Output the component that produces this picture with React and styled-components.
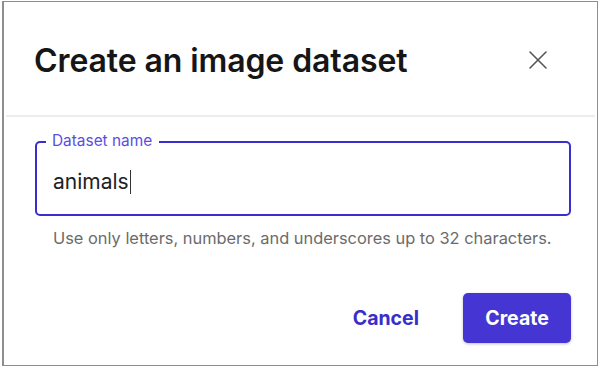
import React from "react";
import styled, { createGlobalStyle } from "styled-components";

const Global = createGlobalStyle`
  html, body { margin: 0; padding: 0; background: #ffffff; }
  * { box-sizing: border-box; }
  body { font-family: Inter, "Noto Sans", Arial, sans-serif; }
`;

const Frame = styled.div`
  width: 600px;
  height: 368px;
  padding: 1px 2px 2px 2px;
  background: #ffffff;
`;

const Dialog = styled.div`
  height: 100%;
  border: 1px solid #8e8e8e;
  border-left-width: 2px;
  background: #ffffff;
  display: flex;
  flex-direction: column;
`;

const Header = styled.div`
  height: 113px;
  display: flex;
  align-items: center;
  justify-content: space-between;
  padding: 3px 48px 0 30px;
`;

const Title = styled.h1`
  margin: 0;
  font-family: Inter, sans-serif;
  font-weight: 600;
  font-size: 32px;
  letter-spacing: -0.1px;
  color: #161616;
`;

const CloseButton = styled.button`
  border: 0;
  background: transparent;
  padding: 0;
  width: 22px;
  height: 22px;
  display: flex;
  align-items: center;
  justify-content: center;
  cursor: pointer;
`;

const Divider = styled.div`
  height: 2px;
  margin: 0 2px;
  background: #ececec;
`;

const Body = styled.div`
  padding: 24px 26px 0 31px;
  display: flex;
  flex-direction: column;
`;

const Field = styled.div`
  position: relative;
  height: 75px;
  border: 2px solid #3a2ecf;
  border-radius: 5px;
  display: flex;
  align-items: center;
  padding: 6px 16px 0 16px;
`;

const Label = styled.span`
  position: absolute;
  top: -11px;
  left: 9px;
  padding: 0 7px 0 6px;
  background: #ffffff;
  font-size: 15.4px;
  line-height: 18px;
  color: #5a4ee0;
`;

const Value = styled.span`
  font-size: 21px;
  color: #222222;
  display: flex;
  align-items: center;
`;

const Caret = styled.span`
  display: inline-block;
  width: 1.5px;
  height: 24px;
  margin-left: 1px;
  background: #333333;
`;

const Helper = styled.p`
  margin: 12px 0 0 18px;
  font-size: 16.4px;
  color: #6b6b6b;
`;

const Footer = styled.div`
  margin-top: auto;
  padding: 0 26px 22px 0;
  display: flex;
  justify-content: flex-end;
  align-items: center;
  gap: 44px;
`;

const TextButton = styled.button`
  border: 0;
  background: transparent;
  font-family: Inter, sans-serif;
  font-weight: 700;
  font-size: 19.5px;
  color: #3a2ec8;
  padding: 0;
  cursor: pointer;
`;

const PrimaryButton = styled.button`
  width: 108px;
  height: 50px;
  border: 0;
  border-radius: 5px;
  background: #4535d3;
  box-shadow: 0 1px 3px rgba(0, 0, 0, 0.25);
  color: #ffffff;
  font-family: Inter, sans-serif;
  font-weight: 700;
  font-size: 19.5px;
  cursor: pointer;
`;

export default function App() {
  return (
    <>
      <Global />
      <Frame>
        <Dialog>
          <Header>
            <Title>Create an image dataset</Title>
            <CloseButton aria-label="Close">
              <svg width="20" height="20" viewBox="0 0 20 20">
                <path d="M2 2 L18 18 M18 2 L2 18" stroke="#555" strokeWidth="1.6" strokeLinecap="round" />
              </svg>
            </CloseButton>
          </Header>
          <Divider />
          <Body>
            <Field>
              <Label>Dataset name</Label>
              <Value>
                animals
                <Caret />
              </Value>
            </Field>
            <Helper>Use only letters, numbers, and underscores up to 32 characters.</Helper>
          </Body>
          <Footer>
            <TextButton>Cancel</TextButton>
            <PrimaryButton>Create</PrimaryButton>
          </Footer>
        </Dialog>
      </Frame>
    </>
  );
}
